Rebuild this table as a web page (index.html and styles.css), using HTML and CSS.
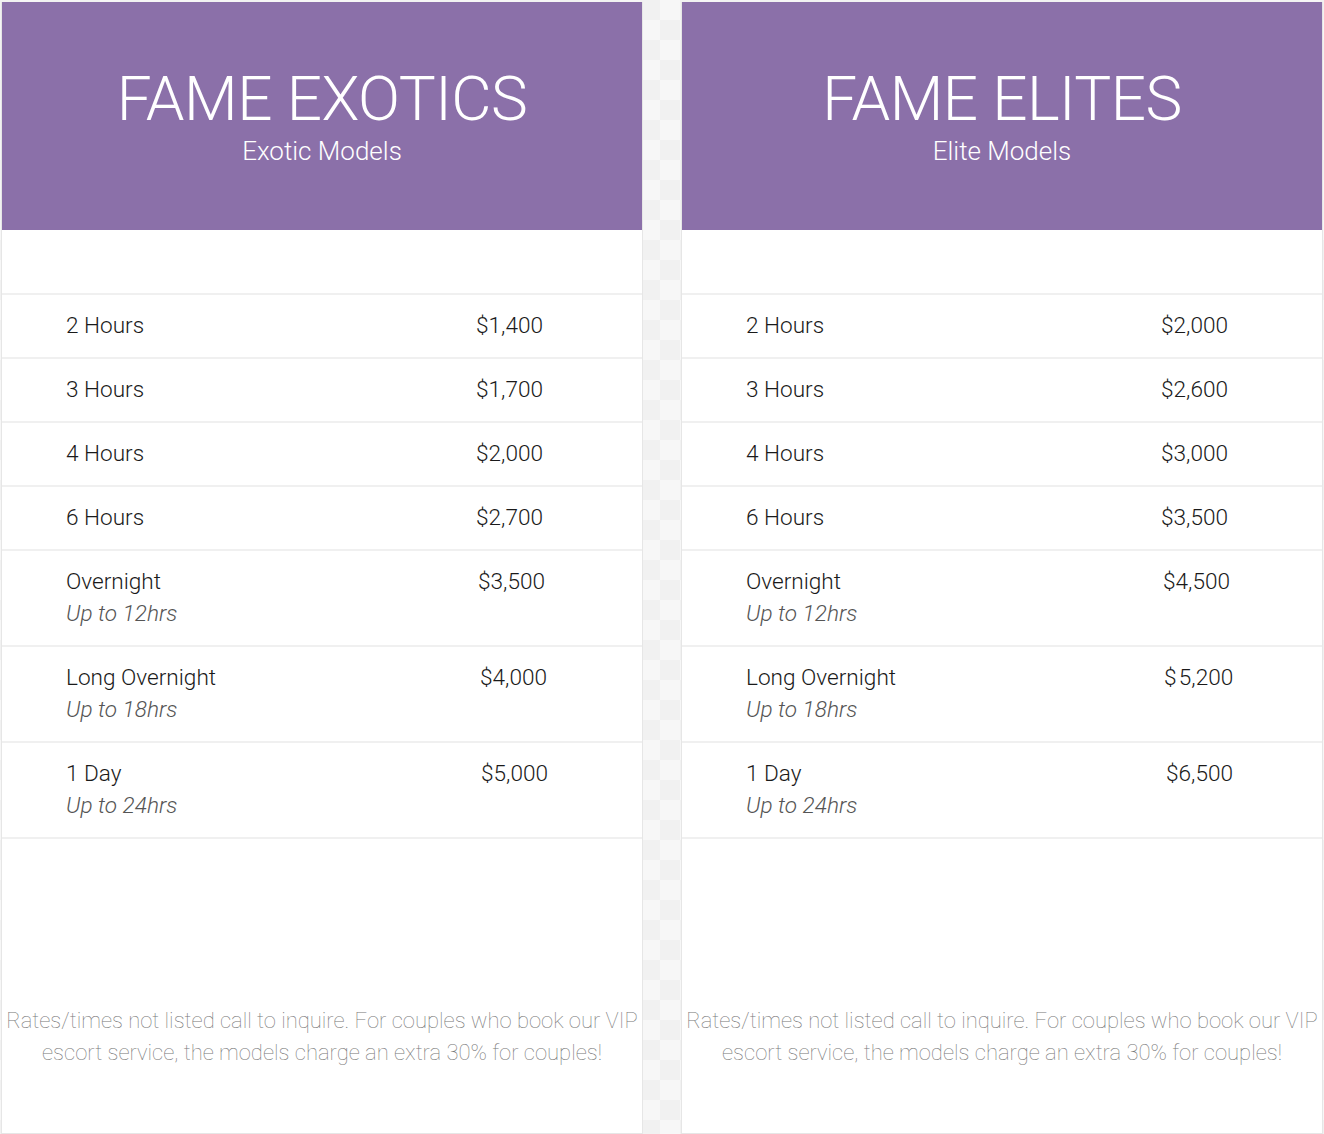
FILE: index.html
```html
<!DOCTYPE html>
<html lang="en">
<head>
<meta charset="utf-8">
<title>Fame Rates</title>
<link rel="stylesheet" href="styles.css">
</head>
<body>
<div class="page">
  <section class="card">
    <header class="card-head">
      <h2 class="title">FAME EXOTICS</h2>
      <p class="subtitle">Exotic Models</p>
    </header>
    <div class="rows">
      <div class="row row-empty"></div>
      <div class="row"><div class="label">2 Hours</div><div class="price p1">$1,400</div></div>
      <div class="row"><div class="label">3 Hours</div><div class="price p1">$1,700</div></div>
      <div class="row"><div class="label">4 Hours</div><div class="price p1">$2,000</div></div>
      <div class="row"><div class="label">6 Hours</div><div class="price p1">$2,700</div></div>
      <div class="row"><div class="label">Overnight<span class="sub">Up to 12hrs</span></div><div class="price p2">$3,500</div></div>
      <div class="row"><div class="label">Long Overnight<span class="sub">Up to 18hrs</span></div><div class="price p3">$4,000</div></div>
      <div class="row"><div class="label">1 Day<span class="sub">Up to 24hrs</span></div><div class="price p4">$5,000</div></div>
    </div>
    <p class="note">Rates/times not listed call to inquire. For couples who book our VIP escort service, the models charge an extra 30% for couples!</p>
  </section>
  <section class="card card-right">
    <header class="card-head">
      <h2 class="title">FAME ELITES</h2>
      <p class="subtitle">Elite Models</p>
    </header>
    <div class="rows">
      <div class="row row-empty"></div>
      <div class="row"><div class="label">2 Hours</div><div class="price p1">$2,000</div></div>
      <div class="row"><div class="label">3 Hours</div><div class="price p1">$2,600</div></div>
      <div class="row"><div class="label">4 Hours</div><div class="price p1">$3,000</div></div>
      <div class="row"><div class="label">6 Hours</div><div class="price p1">$3,500</div></div>
      <div class="row"><div class="label">Overnight<span class="sub">Up to 12hrs</span></div><div class="price p2">$4,500</div></div>
      <div class="row"><div class="label">Long Overnight<span class="sub">Up to 18hrs</span></div><div class="price p3">$&#8202;5,200</div></div>
      <div class="row"><div class="label">1 Day<span class="sub">Up to 24hrs</span></div><div class="price p4">$6,500</div></div>
    </div>
    <p class="note">Rates/times not listed call to inquire. For couples who book our VIP escort service, the models charge an extra 30% for couples!</p>
  </section>
</div>
</body>
</html>
```

FILE: styles.css
```css
html, body {
  margin: 0;
  padding: 0;
}
body {
  font-family: Roboto, "Liberation Sans", sans-serif;
  color: #222;
  background-color: #f3f3f3;
  background-image: conic-gradient(#f7f7f7 25%, #f1f1f1 0 50%, #f7f7f7 0 75%, #f1f1f1 0);
  background-size: 40px 40px;
}
.page {
  display: flex;
  gap: 38px;
  padding: 2px 1px 0 1px;
  width: 1324px;
  box-sizing: border-box;
}
.card {
  width: 642px;
  height: 1132px;
  box-sizing: border-box;
  background: #fff;
  border: 1px solid #e6e6e6;
  border-top: 0;
  display: flex;
  flex-direction: column;
}
.card-head {
  background: #8b70a9;
  height: 228px;
  box-sizing: border-box;
  text-align: center;
  color: #fff;
  padding-top: 62px;
}
.title {
  margin: 0;
  font-weight: 300;
  font-size: 62px;
  line-height: 70px;
  letter-spacing: -0.5px;
}
.subtitle {
  margin: 0;
  font-weight: 300;
  font-size: 26px;
  line-height: 34px;
}
.rows {
  display: flex;
  flex-direction: column;
}
.row {
  display: grid;
  grid-template-columns: 1fr 166px;
  padding: 15px 0 15px 64px;
  border-bottom: 2px solid #f0f0f0;
  font-size: 22.6px;
  line-height: 32px;
  font-weight: 300;
  color: #1a1a1a;
}
.row-empty {
  height: 35px;
  padding-top: 14px;
  padding-bottom: 14px;
}
.label {
  display: flex;
  flex-direction: column;
}
.sub {
  font-style: italic;
  font-weight: 300;
  color: #555;
}
.price { padding-left: 0; }
.price.p2 { padding-left: 2px; }
.price.p3 { padding-left: 4px; }
.price.p4 { padding-left: 5px; }
.card-right .price { padding-left: 5px; }
.card-right .price.p2 { padding-left: 7px; }
.card-right .price.p3 { padding-left: 8px; }
.card-right .price.p4 { padding-left: 10px; }
.note {
  margin: auto 0 0;
  padding: 0 2px 64px;
  text-align: center;
  font-weight: 100;
  font-size: 22px;
  line-height: 32px;
  color: #777;
}
```
